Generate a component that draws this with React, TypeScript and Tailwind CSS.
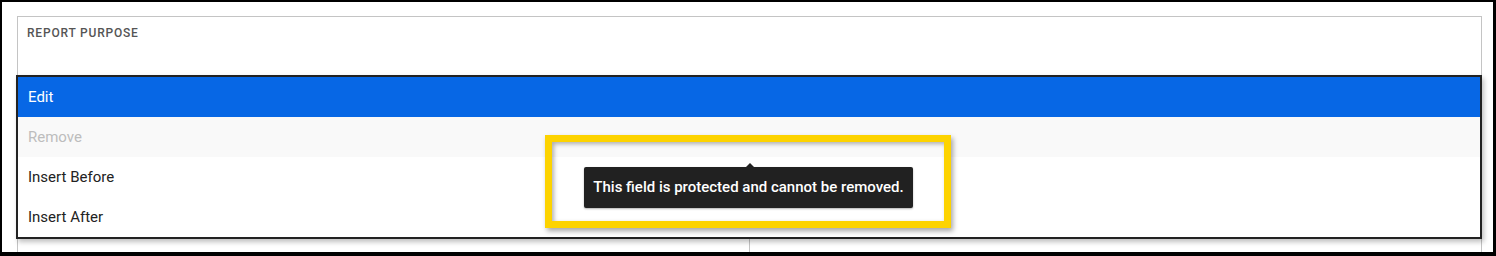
import React from 'react';

const menuItems = [
  { label: 'Edit', state: 'active' },
  { label: 'Remove', state: 'disabled' },
  { label: 'Insert Before', state: 'normal' },
  { label: 'Insert After', state: 'normal' },
];

const App: React.FC = () => {
  return (
    <div className="relative w-[1496px] h-[256px] overflow-hidden bg-white border-t-2 border-l-2 border-r-[3px] border-b-4 border-black font-['Roboto',sans-serif]">
      {/* report panel */}
      <div className="ml-[15px] mt-[14px] w-[1465px] h-[300px] border border-[#c4c4c4] flex flex-col">
        <div className="h-[58px] pl-[9px] pt-[8px]">
          <div className="text-[12px] leading-[16px] font-medium uppercase text-[#555] tracking-[0.8px]">Report Purpose</div>
        </div>
        <div className="grid grid-cols-2 flex-1">
          <div className="border-r border-[#c4c4c4]"></div>
          <div></div>
        </div>
      </div>

      {/* context menu */}
      <div className="absolute left-[14px] top-[73px] w-[1466px] border-2 border-[#222] bg-white shadow-[2px_3px_5px_rgba(0,0,0,0.25)]">
        {menuItems.map((item) => (
          <div
            key={item.label}
            className={
              item.state === 'active'
                ? 'h-[40px] flex items-center pl-[10px] text-[15px] bg-[#0767e5] text-white'
                : item.state === 'disabled'
                ? 'h-[40px] flex items-center pl-[10px] text-[15px] bg-[#f9f9f9] text-[#bdbdbd]'
                : 'h-[40px] flex items-center pl-[10px] text-[15px] bg-white text-[#222]'
            }
          >
            {item.label}
          </div>
        ))}
      </div>

      {/* highlight frame */}
      <div className="absolute left-[543px] top-[133px] w-[406px] h-[93px] border-[7px] border-[#fdd300] shadow-[2px_3px_5px_rgba(0,0,0,0.35),inset_2px_2px_4px_rgba(0,0,0,0.3)]"></div>

      {/* tooltip */}
      <div className="absolute left-[582px] top-[165px] w-[329px] h-[41px] bg-[#212121] rounded-[2px] flex items-center justify-center text-white text-[15px] font-medium shadow-[0_1px_2px_rgba(0,0,0,0.3)]">
        <span className="absolute -top-[4px] left-[161px] w-0 h-0 border-l-[5px] border-r-[5px] border-b-[5px] border-l-transparent border-r-transparent border-b-[#212121]"></span>
        This field is protected and cannot be removed.
      </div>
    </div>
  );
};

export default App;
